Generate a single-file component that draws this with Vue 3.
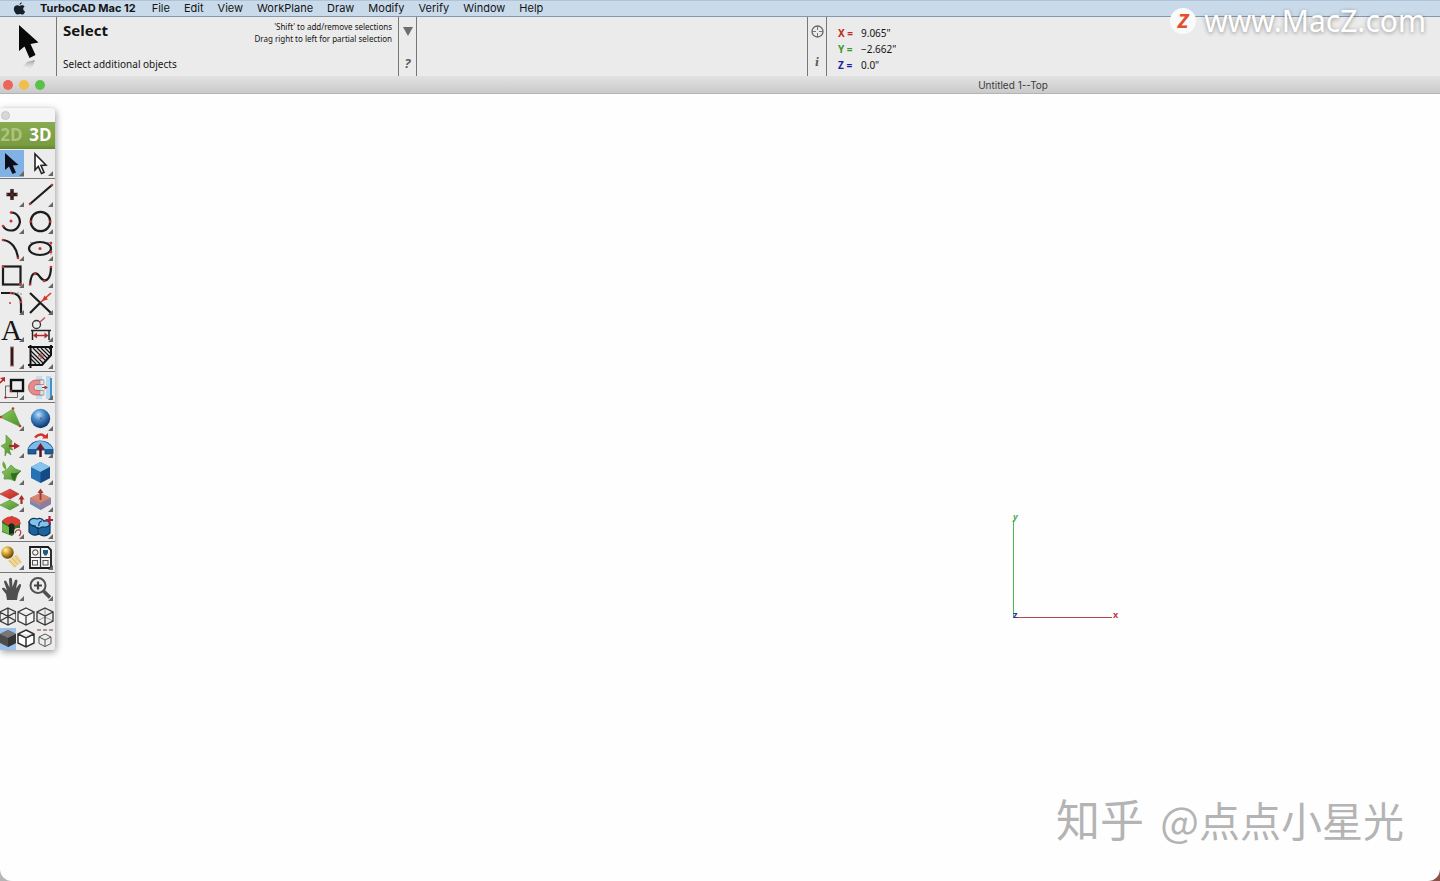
<script setup>
import { ref } from 'vue'

const menus = ['File', 'Edit', 'View', 'WorkPlane', 'Draw', 'Modify', 'Verify', 'Window', 'Help']

const coords = [
  { axis: 'X', value: '9.065"' },
  { axis: 'Y', value: '−2.662"' },
  { axis: 'Z', value: '0.0"' }
]

const dot = (x, y, r = 1.3) => `<circle cx="${x}" cy="${y}" r="${r}" fill="#c93434"/>`
const ink = 'fill="none" stroke="#1c1c1c" stroke-width="2.2"'
const cursor = 'M5 3V20L9 16.5L12.5 24L16 22.5L12.8 15.5L18.5 15Z'

const groups = [
  [
    { name: 'Select', art: `<path d="${cursor}" fill="#0c1016"/>` },
    { name: 'Select by shape', art: '<path d="M9 4V20L12.3 16.5L15.5 23.5L18 22.4L15 15.5L20 15Z" fill="#fff" stroke="#222" stroke-width="1.6"/>' }
  ],
  [
    { name: 'Point', art: `<path d="M12 8V19M6.5 13.5H17.5" stroke="#1c1c1c" stroke-width="3.4"/>${dot(12, 9, 0.8)}${dot(12, 18, 0.8)}${dot(7.5, 13.5, 0.8)}${dot(16.5, 13.5, 0.8)}<circle cx="12" cy="13.5" r="1.6" fill="#8c1c1c"/>` },
    { name: 'Line', art: `<path d="M4 23L26 4" ${ink}/>${dot(4, 23)}${dot(26, 4)}` },
    { name: 'Arc', art: `<path d="M11 4.5A9 9 0 1 1 3 18" ${ink}/>${dot(11, 4.5)}${dot(3, 18)}${dot(11, 13, 1.5)}` },
    { name: 'Circle', art: `<circle cx="14.5" cy="13.5" r="9.7" ${ink}/>${dot(5, 13.5)}${dot(24, 13.5)}` },
    { name: 'Curve', art: `<path d="M3 5C12 6 17 14 18 23" ${ink}/>${dot(3, 5)}${dot(18, 23)}` },
    { name: 'Ellipse', art: `<path d="M4 7.5H25V20" fill="none" stroke="#999" stroke-width="1"/><ellipse cx="14" cy="13.5" rx="11" ry="6.5" ${ink}/>${dot(14, 13.5, 1.5)}${dot(25, 8)}${dot(25, 17)}` },
    { name: 'Rectangle', art: `<rect x="3" y="4.5" width="17.5" height="18" ${ink}/>${dot(3, 5)}${dot(20, 22)}` },
    { name: 'Spline', art: `<path d="M4 23C5 8 11 10 14 15C19 22 25 18 25 4.5" ${ink}/>${dot(4, 22.5)}${dot(9, 12)}${dot(18, 19)}${dot(25, 5)}` },
    { name: 'Fillet', art: `<path d="M1 4H10Q21 4 21 15V24" ${ink}/><path d="M13 4H21V13" fill="none" stroke="#888" stroke-width="1" stroke-dasharray="2"/>${dot(11, 4)}${dot(21, 13)}${dot(10, 14, 1)}` },
    { name: 'Trim', art: `<path d="M4 4L25 24M4 24L15 13" ${ink}/><path d="M15 13L25 4" stroke="#d6352c" stroke-width="1.6"/><path d="M16 12L22 10.5L18.5 6.5Z" fill="#d6352c"/>` },
    { name: 'Text', art: '<text x="1" y="24" font-family="Liberation Serif, serif" font-size="29" fill="#161616">A</text>' },
    { name: 'Dimension', art: '<circle cx="10.500" cy="8.500" r="4" fill="none" stroke="#333" stroke-width="1.300"/><path d="M14 6L19 1.500" stroke="#c44" stroke-width="1.300"/><path d="M5 14.500H25M6.500 14.500V24M23 14.500V24" stroke="#222" stroke-width="1.500"/><path d="M9 19.500H20" stroke="#b52828" stroke-width="1.500"/><path d="M7 19.500L11 16.500V22.500ZM22.500 19.500L18.500 16.500V22.500Z" fill="#b52828"/>' },
    { name: 'Symmetry', art: '<rect x="10.500" y="4" width="3" height="19" fill="#222" stroke="#a77" stroke-width="1"/>' },
    { name: 'Hatch', art: '<path d="M5 4H25V12L16 23H5Z" fill="#ddd"/><path d="M2 4H27M4.500 2V25M25 2V12L16 22H2" fill="none" stroke="#111" stroke-width="2"/><path d="M5 8L18 21M5 12L14 21M5 16L10 21M7 5L20 18M11 5L22 16M15 5L24 14M19 5L25 11M23 5L25 7" fill="none" stroke="#111" stroke-width="1.100"/><path d="M12 13H18M15 10V16" stroke="#b33"/>' }
  ],
  [
    { name: 'Transform', art: '<path d="M11 12H5.500V23.500H17.500V17" fill="none" stroke="#666"/><rect x="11" y="6" width="12" height="11" fill="none" stroke="#111" stroke-width="2.400"/><path d="M0 9L4 5" stroke="#b42828" stroke-width="1.600"/><path d="M0 4L5 3V8Z" fill="#b42828"/><circle cx="5.500" cy="23.500" r="1.200" fill="#b42828"/><circle cx="11" cy="17" r="1.200" fill="#b42828"/>' },
    { name: 'Snap', art: '<path d="M13 2V25" stroke="#c5def0" stroke-width="6"/><path d="M22.500 2V25" stroke="#b5d7ef" stroke-width="5"/><path d="M25 4V25" stroke="#3f92ca" stroke-width="2"/><path d="M17 6H10A7.500 7.500 0 0 0 10 21H17V16.500H11A3 3 0 0 1 11 10.500H17Z" fill="#e58c8b" stroke="#c05555" stroke-width=".8"/><path d="M14 6H18V10.500H14ZM14 16.500H18V21H14Z" fill="#e3e3e3" stroke="#888" stroke-width=".6"/><path d="M16 13.500H20" stroke="#a33"/><path d="M22 13.500L18.500 11.500V15.500Z" fill="#a33"/>' }
  ],
  [
    { name: 'Surface', art: `<path d="M0 12L13 4L21 22Z" fill="url(#gGreen)" stroke="#5a9a3c" stroke-width=".7"/>${dot(13, 3.5)}${dot(1, 12)}${dot(20, 21)}` },
    { name: 'Sphere', art: '<circle cx="14.5" cy="13.5" r="9.7" fill="url(#gBall)"/><circle cx="15" cy="13.5" r="1" fill="#bd3a4a"/>' },
    { name: 'Extrude surface', art: '<path d="M6 3L12 9L11 15L13 18L9 17L11 23L7 20L5 24L5 17L1 14L6 11Z" fill="url(#gGreen)" stroke="#4d8b34" stroke-width=".6"/><path d="M9 14H15" stroke="#a82c2b" stroke-width="2.2"/><path d="M20 14L14 10.5V17.5Z" fill="#a82c2b"/>' },
    { name: 'Revolve', art: '<path d="M2 17Q5 9 14 9Q24 9 27 17V22H19V18H10V22H2Z" fill="#1d5e98" stroke="#123d66" stroke-width=".8"/><path d="M2 17Q7 9 14 9Q22 9 27 17H19Q14 13 10 17Z" fill="#79bcec"/><path d="M14.5 25V15" stroke="#5c1420" stroke-width="2.500"/><path d="M10.500 17L14.500 11L18.500 17Z" fill="#7a1822"/><path d="M9 5.500Q14 0 19 4.500" fill="none" stroke="#cf342e" stroke-width="2.500"/><path d="M16 6.500H22V1Z" fill="#cf342e"/>' },
    { name: 'Blend surface', art: '<path d="M3 2Q7 6 6 11Q1 8 3 2Z" fill="#6aa537"/><path d="M2 13Q7 12 11 6Q15 11 21 12Q16 15 15 22Q10 19 4 20Q6 16 2 13Z" fill="url(#gGreen)" stroke="#4c8630" stroke-width=".7"/><path d="M11 14Q16 15 21 12Q16 15 15 22Q11 20 11 14Z" fill="#2f6d22"/>' },
    { name: 'Box', art: '<path d="M14.5 3L24 8V19L14.5 24L5 19V8Z" fill="#2772b4"/><path d="M5 8L14.5 3L24 8L14.5 13Z" fill="#87c4ed"/><path d="M14.5 13L24 8V19L14.5 24Z" fill="#154a83"/>' },
    { name: 'Offset surface', art: '<path d="M0 8L10 3L19 8L10 13Z" fill="url(#gRed)" stroke="#9e2820" stroke-width=".5"/><path d="M0 19L10 14L19 19L10 24Z" fill="url(#gGreen)" stroke="#3d8330" stroke-width=".5"/><path d="M21.5 18V12" stroke="#a32d2b" stroke-width="2.200"/><path d="M18.500 13.500L21.500 9L24.500 13.500Z" fill="#a32d2b"/>' },
    { name: 'Push pull', art: '<path d="M4 12L14.500 7L25 12V18L14.500 24L4 18Z" fill="#6f8bb5"/><path d="M4 12L14.500 7L25 12L14.500 17Z" fill="#d9866f"/><path d="M4 12L14.500 17V20L4 15Z" fill="#b98285"/><path d="M14.500 17L25 12V18L14.500 24Z" fill="#8f7e98"/><path d="M14.500 14V6" stroke="#9f3b32" stroke-width="1.800"/><path d="M11.500 7L14.500 2.500L17.500 7Z" fill="#9f3b32"/>' },
    { name: 'Blend solid', art: '<path d="M2 8L12 3L20 7V16L12 23L2 19Z" fill="#2f6d2c"/><path d="M2 8Q7 2 14 4Q20 5 21 11L15 13Q13 8 8 12Z" fill="#dc3e35"/><path d="M8 13Q11 8 14.500 12V20L9 21Z" fill="#132c1b"/><path d="M2 10L9 14V21.500L2 18Z" fill="#70b548"/><circle cx="18" cy="19" r="4" fill="#eee"/><path d="M15 20Q16 16 20 17M20 17Q22 20 19 23" fill="none" stroke="#b53b37" stroke-width="1.200"/>' },
    { name: 'Boolean add', art: '<path d="M3 9V19Q7 24 13 21Q19 25 24 20V10Z" fill="#1c639e" stroke="#0f3458" stroke-width="1.200"/><path d="M3 9Q5 4 11 6Q15 4 18 8Q24 7 24 11Q22 15 16 14Q11 17 9 13Q4 13 3 9Z" fill="#82c3ec" stroke="#0f3458" stroke-width="1.300"/><path d="M12 14V22M16 8Q12 9 13 13" fill="none" stroke="#0f3458" stroke-width="1.200"/><path d="M23.500 3V11M19.500 7H27" stroke="#a3263c" stroke-width="2.200"/>' }
  ],
  [
    { name: 'Materials', art: '<path d="M8 17L17 10L22 18L14 24Z" fill="#f0d998"/><path d="M9 16L16 23M12 14L18 21M15 12L21 19" stroke="#d5b873" stroke-width="1"/><circle cx="7.500" cy="8.500" r="6.200" fill="url(#gGold)"/>' },
    { name: 'Symbols', art: '<path d="M4 3H22L25 6V24H4Z" fill="#f4f4f4" stroke="#1b1b1b" stroke-width="1.800"/><path d="M14.500 3V24M4 13.500H25" stroke="#333" stroke-width="1.200"/><circle cx="9.300" cy="8.500" r="2.700" fill="none" stroke="#333"/><rect x="6.500" y="16.500" width="5" height="4.500" fill="none" stroke="#555"/><rect x="17" y="16.500" width="5" height="4.500" fill="none" stroke="#555"/><path d="M17 6H22V9L20.500 11.500H18.500L17 9Z" fill="#205b85"/>' }
  ],
  [
    { name: 'Pan', art: '<path d="M7 25L6 19L2 14Q2 12 4.500 13L7 15.500L4 7Q4.500 4.500 6.500 6.500L9.500 12.500L9 4Q10.500 1.500 12 4L12.500 12L15 5Q17 3.500 17.500 6L16 13.500L19.500 9Q21.500 8.500 21 11L18 19L17 25Z" fill="#505050"/>' },
    { name: 'Zoom', art: '<circle cx="12" cy="10.500" r="7.500" fill="#ededed" stroke="#505050" stroke-width="2"/><path d="M17.500 16L24 22.500" stroke="#505050" stroke-width="3.500"/><path d="M8 10.500H16M12 6.500V14.500" stroke="#444" stroke-width="2.200"/>' }
  ]
]

const shell = 'M10 3L18 7V16L10 20L2 16V7Z'
const views = [
  { name: 'Wireframe', art: `<path d="${shell}M10 3V20M2 7L18 16M18 7L2 16" fill="none" stroke="#383838" stroke-width="1.300"/>` },
  { name: 'Hidden line', art: `<path d="${shell}M2 7L10 11L18 7M10 11V20" fill="#f4f4f4" stroke="#383838" stroke-width="1.300"/>` },
  { name: 'Hidden dimmed', art: `<path d="M10 3V12L2 16M10 12L18 16" fill="none" stroke="#999"/><path d="${shell}M2 7L10 11L18 7M10 11V20" fill="none" stroke="#383838" stroke-width="1.300"/>` },
  { name: 'Shaded', art: `<path d="${shell}" fill="#4c4c4c"/><path d="M2 7L10 3L18 7L10 11Z" fill="#777"/><path d="M10 11L18 7V16L10 20Z" fill="#343434"/>` },
  { name: 'Shaded outline', art: `<path d="${shell}M2 7L10 11L18 7M10 11V20" fill="#fff" stroke="#303030" stroke-width="1.500"/>` },
  { name: 'Display options', art: '<path d="M2 3H18" stroke="#b3948c" stroke-width="2" stroke-dasharray="4 2"/><path d="M10 7L16 10V16.500L10 19.500L4 16.500V10ZM4 10L10 13L16 10M10 13V19.500" fill="#eee" stroke="#555"/>' }
]

const activeTool = ref('Select')
const activeView = ref('Shaded')
const mode = ref('3D')
</script>

<template>
  <div class="desktop">
    <nav class="menubar" aria-label="Main menu">
      <button class="apple" aria-label="Apple menu">
        <svg width="12" height="13" viewBox="0 0 12 13"><path d="M8.300 0Q8.300 2.300 6 3Q5.900 1 8.300 0ZM6 3.900C7 3.900 9.500 2.200 11.200 4.600C9 6 9.400 8.600 11.600 9.400C10.500 12.200 9.300 13 7.700 12.300Q6.200 11.700 5 12.300C3.300 13 2.100 12.100 1 9.600C-.5 6.200 1 3.300 3.600 3.300C4.600 3.300 5.400 3.900 6 3.900Z" fill="#15202b" /></svg>
      </button>
      <button class="app-name">TurboCAD Mac 12</button>
      <button v-for="m in menus" :key="m">{{ m }}</button>
    </nav>

    <header class="info">
      <div class="cell tool-icon">
        <svg width="28" height="48" viewBox="0 0 28 48">
          <defs><linearGradient id="gFade" x1="0" y1="0" x2="0" y2="1"><stop offset="0" stop-color="#999" /><stop offset="1" stop-color="#ddd" stop-opacity="0" /></linearGradient></defs>
          <path d="M5 2V28L10.500 23.500L15.500 35L21.500 32L16.500 21L24.500 19.500Z" fill="#080808" />
          <path d="M13 39L21 37L19 43L15 47L12 43L7 47Z" fill="url(#gFade)" />
        </svg>
      </div>
      <div class="cell prompt">
        <div class="prompt-top">
          <h1>Select</h1>
          <p class="hint">'Shift' to add/remove selections<br />Drag right to left for partial selection</p>
        </div>
        <p class="status">Select additional objects</p>
      </div>
      <div class="cell side">
        <button aria-label="Tool options"><svg width="10" height="9" viewBox="0 0 10 9"><path d="M0 0H10L5 9Z" fill="#6e6e6e" /></svg></button>
        <button class="glyph" aria-label="Help">?</button>
      </div>
      <div class="cell"></div>
      <div class="cell side">
        <button aria-label="Coordinates">
          <svg width="13" height="13" viewBox="0 0 13 13"><circle cx="6.500" cy="6.500" r="5.500" fill="none" stroke="#666" stroke-width="1.300" /><path d="M6.500 1V5M6.500 8V12M1 6.500H5M8 6.500H12" stroke="#777" /></svg>
        </button>
        <button class="glyph info-glyph" aria-label="Information">i</button>
      </div>
      <dl class="coords">
        <div v-for="c in coords" :key="c.axis">
          <dt :class="c.axis">{{ c.axis }} =</dt>
          <dd>{{ c.value }}</dd>
        </div>
      </dl>
    </header>

    <div class="titlebar">
      <div class="lights">
        <button class="close" aria-label="Close"></button>
        <button class="minimize" aria-label="Minimize"></button>
        <button class="expand" aria-label="Zoom window"></button>
      </div>
      <h2>Untitled 1--Top</h2>
    </div>

    <main class="canvas">
      <aside class="palette" aria-label="Tools">
        <svg class="defs" width="0" height="0" aria-hidden="true">
          <defs>
            <linearGradient id="gGreen" x1="0" y1="0" x2="1" y2="1"><stop offset="0" stop-color="#91cc60" /><stop offset="1" stop-color="#4a8d2b" /></linearGradient>
            <linearGradient id="gRed" x1="0" y1="0" x2="1" y2="1"><stop offset="0" stop-color="#ef5a4c" /><stop offset="1" stop-color="#b52a26" /></linearGradient>
            <radialGradient id="gBall" cx=".4" cy=".3" r=".7"><stop offset="0" stop-color="#bfe0fa" /><stop offset=".4" stop-color="#4a8fd0" /><stop offset="1" stop-color="#0c3468" /></radialGradient>
            <radialGradient id="gGold" cx=".35" cy=".3" r=".7"><stop offset="0" stop-color="#fff5bd" /><stop offset=".4" stop-color="#dcae35" /><stop offset="1" stop-color="#6b4709" /></radialGradient>
          </defs>
        </svg>
        <div class="grip"><button aria-label="Close palette"></button></div>
        <div class="modes">
          <button v-for="m in ['2D', '3D']" :key="m" :class="{ on: mode === m }" @click="mode = m">{{ m }}</button>
        </div>
        <div v-for="(g, i) in groups" :key="i" class="group">
          <button v-for="t in g" :key="t.name" class="tool" :class="{ on: activeTool === t.name }" :aria-label="t.name" @click="activeTool = t.name">
            <svg width="27" height="27" viewBox="0 0 27 27" v-html="t.art"></svg>
          </button>
        </div>
        <div class="views">
          <button v-for="v in views" :key="v.name" :class="{ on: activeView === v.name }" :aria-label="v.name" @click="activeView = v.name">
            <svg width="20" height="22" viewBox="0 1 20 22" v-html="v.art"></svg>
          </button>
        </div>
      </aside>

      <svg class="axes" width="116" height="114" viewBox="0 0 116 114" aria-label="Axes">
        <rect x="7" y="12" width="1" height="98" fill="#4db84d" />
        <rect x="8" y="109" width="98" height="1" fill="#b8434c" />
        <text x="7" y="12" fill="#4fae4f" font-style="italic">y</text>
        <text x="7" y="110" fill="#3030a8">z</text>
        <text x="107" y="110" fill="#c23c48">x</text>
      </svg>
    </main>

    <div class="site-mark">
      <span class="badge">Z</span>
      <span>www.MacZ.com</span>
    </div>
    <div class="author-mark"><span class="brand">知乎</span> @点点小星光</div>
  </div>
</template>

<style>
body {
  background: linear-gradient(90deg, #b5b5b5 50%, #8a5248 50%);
}
</style>

<style scoped>
.desktop {
  position: relative;
  display: flex;
  flex-direction: column;
  min-height: 100vh;
  overflow: hidden;
  color: #141414;
  font-family: "Noto Sans", "Open Sans", sans-serif;
}
button {
  margin: 0;
  padding: 0;
  border: 0;
  background: none;
  color: inherit;
  font: inherit;
}
svg {
  display: block;
}
h1, h2, p, dl, dd {
  margin: 0;
}
.menubar {
  display: flex;
  align-items: center;
  gap: 14px;
  height: 16px;
  padding-left: 13px;
  border-bottom: 1px solid #8796a8;
  background: #c9dbeb;
  box-shadow: inset 0 1px #b1c4d7;
  font: 11px/16px Inter, sans-serif;
}
.apple svg {
  width: 13px;
}
.app-name {
  padding-right: 2px;
  font-weight: 700;
}
.info {
  display: grid;
  grid-template-columns: 57px 342px 18px 391px 19px 1fr;
  height: 59px;
  background: #ebebeb;
}
.cell {
  border-right: 1px solid #777;
}
.tool-icon {
  padding: 6px 0 0 14px;
}
.prompt {
  display: flex;
  flex-direction: column;
  justify-content: space-between;
  padding: 3px 6px 5px;
}
.prompt-top {
  display: flex;
  justify-content: space-between;
  height: 30px;
}
h1 {
  font-size: 15px;
  line-height: 20px;
}
.hint {
  padding-top: 1px;
  font-size: 8px;
  line-height: 12px;
  text-align: right;
}
.status {
  font-size: 10px;
  line-height: 14px;
}
.side {
  display: flex;
  flex-direction: column;
  align-items: center;
  gap: 18px;
  padding-top: 7px;
}
.side button {
  display: flex;
  align-items: center;
  justify-content: center;
  height: 14px;
}
.glyph {
  color: #5e5e5e;
  font: italic 700 13px/14px "Noto Sans", sans-serif;
}
.info-glyph {
  font-family: "DejaVu Serif", serif;
  font-size: 11px;
}
.coords {
  padding: 8px 11px 0;
  font-size: 10px;
  line-height: 16px;
}
.coords div {
  display: flex;
}
.coords dt {
  width: 23px;
  font-weight: 700;
}
.X { color: #c32a22; }
.Y { color: #3c9b2c; }
.Z { color: #2020a0; }
.titlebar {
  display: flex;
  align-items: center;
  height: 17px;
  border-bottom: 1px solid #b4b4b4;
  background: linear-gradient(#e2e2e2, #cacaca);
}
.lights {
  display: flex;
  gap: 6px;
  width: 40.7%;
  padding-left: 3px;
  box-sizing: border-box;
}
.lights button {
  width: 10px;
  height: 10px;
  border-radius: 50%;
}
.lights .close { background: #ed655a; }
.lights .minimize { background: #f2be49; }
.lights .expand { background: #5ac24b; }
h2 {
  flex: 1;
  color: #3c3c3c;
  font: 10px/16px Inter, sans-serif;
  text-align: center;
}
.canvas {
  position: relative;
  flex: 1;
  padding-top: 14px;
  border-radius: 0 0 12px 12px;
  background: #fefefe;
}
.palette {
  width: 55px;
  border-radius: 0 4px 2px 0;
  background: #ececec;
  box-shadow: 1px 2px 7px rgba(0, 0, 0, 0.4);
}
.defs {
  position: absolute;
}
.grip {
  display: flex;
  align-items: center;
  height: 14px;
  padding-left: 1px;
  border-radius: 0 4px 0 0;
  background: #f5f5f5;
}
.grip button {
  width: 9px;
  height: 9px;
  border: 1px solid #c6c6c6;
  border-radius: 50%;
  background: #d8d8d8;
}
.modes {
  display: grid;
  grid-template-columns: 26px 29px;
  height: 27px;
  margin-bottom: 1px;
  background: linear-gradient(#89aa50, #7a9c40 85%, #64852e);
  color: #adc37f;
  font: 700 17px/25px "Open Sans", sans-serif;
}
.modes button {
  width: 23px;
  height: 25px;
}
.modes button + button {
  width: 29px;
}
.modes .on {
  color: #fff;
}
.group {
  display: grid;
  grid-template-columns: 26px 29px;
  padding-bottom: 1px;
  border-bottom: 1px solid #777;
  margin-bottom: 2px;
}
.group:nth-last-child(2) {
  border-color: transparent;
}
.tool {
  position: relative;
  height: 27px;
}
.tool svg {
  overflow: visible;
}
.tool.on {
  background: linear-gradient(90deg, #81b2e5 24px, transparent 24px);
}
.tool::after {
  content: "";
  position: absolute;
  right: 2px;
  bottom: 1px;
  border-bottom: 5px solid #666;
  border-left: 5px solid transparent;
}
.views {
  display: grid;
  grid-template-columns: 16px 19px 20px;
}
.views button {
  display: flex;
  justify-content: center;
  overflow: hidden;
}
.views svg {
  flex: none;
}
.views .on {
  background: #9cc1e8;
}
.axes {
  position: absolute;
  top: 52.6%;
  left: 69.86%;
  font: 700 9px "Noto Sans", sans-serif;
}
.site-mark {
  position: absolute;
  top: 0;
  right: 14px;
  display: flex;
  align-items: center;
  gap: 8px;
  color: #fff;
  font: 30px/42px "Noto Sans", sans-serif;
  text-shadow: 0 1px 4px rgba(0, 0, 0, 0.4);
  pointer-events: none;
}
.badge {
  width: 26px;
  height: 26px;
  border-radius: 50%;
  background: #fafafa;
  color: #e2502d;
  font: italic 700 20px/26px "Open Sans", sans-serif;
  text-align: center;
  text-shadow: none;
}
.author-mark {
  position: absolute;
  right: 36px;
  bottom: 32px;
  color: #b4b4b4;
  font: 41px/60px "Noto Sans CJK SC", sans-serif;
  pointer-events: none;
}
.brand {
  margin-right: 7px;
  font-size: 44px;
}
</style>
